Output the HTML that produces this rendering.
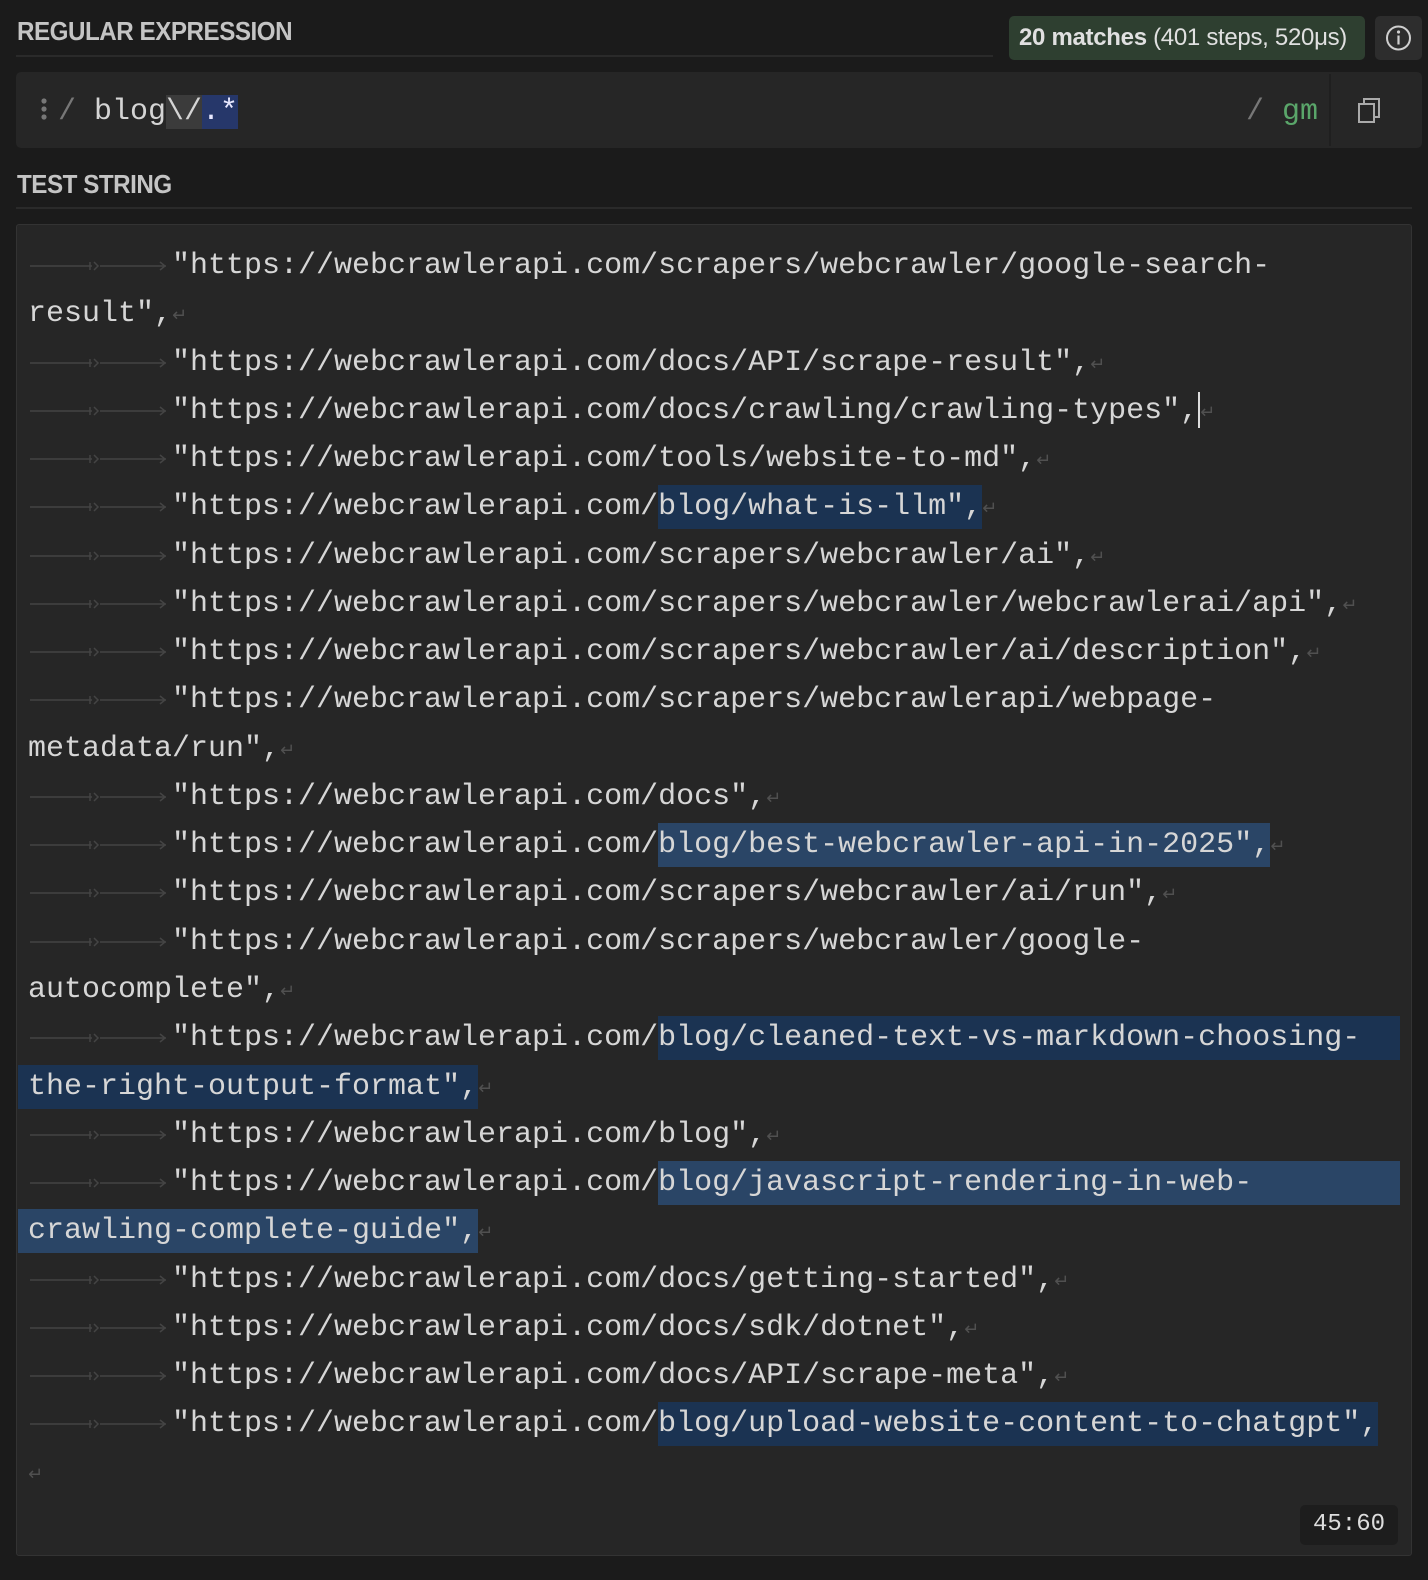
<!DOCTYPE html>
<html><head><meta charset="utf-8"><style>
*{margin:0;padding:0;box-sizing:border-box}
body{width:1428px;height:1580px;background:#1b1b1b;position:relative;overflow:hidden;font-family:"Liberation Sans",sans-serif;color:#d4d4d4}
.h{position:absolute;left:17px;font-size:26px;font-weight:bold;color:#c4c4c4;letter-spacing:-0.5px;transform:scaleX(0.93);transform-origin:left}
.rule{position:absolute;height:2px;background:#2a2a2a}
.badge{position:absolute;left:1009px;top:16px;width:356px;height:44px;background:#2e3f30;border-radius:5px;font-size:24px;line-height:44px;padding-left:10px;color:#e0e0e0;letter-spacing:-0.3px}
.info{position:absolute;left:1375px;top:16px;width:47px;height:44px;background:#2d2d2d;border-radius:5px}
.rbox{position:absolute;left:16px;top:72px;width:1406px;height:76px;background:#262626;border-radius:5px}
.mono{font-family:"Liberation Mono",monospace;font-size:30px}
.ed{position:absolute;left:16px;top:224px;width:1396px;height:1332px;background:#262626;border:1px solid #333;border-radius:3px}
.rows{position:absolute;left:11px;top:17px}
.r{height:48.28px;line-height:48.28px;white-space:pre;font-family:"Liberation Mono",monospace;font-size:30px;color:#d6d6d6;position:relative}
.t{display:inline-block;width:144px;height:48px;vertical-align:top;position:relative}
.t svg{position:absolute;left:0;top:0}
.rt{color:#505050;font-size:18px;font-family:"DejaVu Sans",sans-serif}
.a{background:#1b3352;padding:5px 0}
.b{background:#2a4566;padding:5px 0}
.cur{display:inline-block;width:2px;height:36px;background:#ddd;vertical-align:middle}
</style></head><body>
<div class="h" style="top:16px">REGULAR EXPRESSION</div>
<div class="rule" style="left:16px;top:55px;width:977px"></div>
<div class="badge"><b>20 matches</b> (401 steps, 520μs)</div>
<div class="info"><svg width="47" height="44" viewBox="0 0 47 44"><circle cx="23.5" cy="22" r="11.5" fill="none" stroke="#cfcfcf" stroke-width="2"/><circle cx="23.5" cy="16" r="1.6" fill="#cfcfcf"/><rect x="22.4" y="19.5" width="2.2" height="9" fill="#cfcfcf"/></svg></div>
<div class="rbox">
<svg style="position:absolute;left:24px;top:26px" width="8" height="24"><circle cx="4" cy="3" r="2.6" fill="#777"/><circle cx="4" cy="11" r="2.6" fill="#777"/><circle cx="4" cy="19" r="2.6" fill="#777"/></svg>
<div class="mono" style="position:absolute;left:42px;top:21px;line-height:38px;white-space:pre"><span style="color:#777">/</span> blog<span style="background:#3b3b3b">\/</span><span style="background:#26376a;color:#e8e8ff">.*</span></div>
<div class="mono" style="position:absolute;left:1230px;top:21px;line-height:38px;white-space:pre"><span style="color:#777">/</span> <span style="color:#5aa66a">gm</span></div>
<div style="position:absolute;left:1313px;top:2px;width:2px;height:72px;background:#1f1f1f"></div>
<svg style="position:absolute;left:1340px;top:24px" width="30" height="30" viewBox="0 0 30 30"><rect x="3" y="8" width="15" height="18" fill="none" stroke="#aaa" stroke-width="2"/><path d="M8 8V3h15v18h-5" fill="none" stroke="#aaa" stroke-width="2"/></svg>
</div>
<div class="h" style="top:169px">TEST STRING</div>
<div class="rule" style="left:16px;top:207px;width:1396px"></div>
<div class="ed">
<div class="rows">
<div class="r"><span class="t"><svg width="144" height="48"><path d="M2 24H64M72 24H138" stroke="#444" stroke-width="1.5"/><path d="M62 20v8M66 20l4 4-4 4M132 20l5 4-5 4" stroke="#444" stroke-width="1.5" fill="none"/></svg></span>"https://webcrawlerapi.com/scrapers/webcrawler/google-search-</div>
<div class="r">result",<span class="rt">↵</span></div>
<div class="r"><span class="t"><svg width="144" height="48"><path d="M2 24H64M72 24H138" stroke="#444" stroke-width="1.5"/><path d="M62 20v8M66 20l4 4-4 4M132 20l5 4-5 4" stroke="#444" stroke-width="1.5" fill="none"/></svg></span>"https://webcrawlerapi.com/docs/API/scrape-result",<span class="rt">↵</span></div>
<div class="r"><span class="t"><svg width="144" height="48"><path d="M2 24H64M72 24H138" stroke="#444" stroke-width="1.5"/><path d="M62 20v8M66 20l4 4-4 4M132 20l5 4-5 4" stroke="#444" stroke-width="1.5" fill="none"/></svg></span>"https://webcrawlerapi.com/docs/crawling/crawling-types",<span class="cur"></span><span class="rt">↵</span></div>
<div class="r"><span class="t"><svg width="144" height="48"><path d="M2 24H64M72 24H138" stroke="#444" stroke-width="1.5"/><path d="M62 20v8M66 20l4 4-4 4M132 20l5 4-5 4" stroke="#444" stroke-width="1.5" fill="none"/></svg></span>"https://webcrawlerapi.com/tools/website-to-md",<span class="rt">↵</span></div>
<div class="r"><span class="t"><svg width="144" height="48"><path d="M2 24H64M72 24H138" stroke="#444" stroke-width="1.5"/><path d="M62 20v8M66 20l4 4-4 4M132 20l5 4-5 4" stroke="#444" stroke-width="1.5" fill="none"/></svg></span>"https://webcrawlerapi.com/<span class="a">blog/what-is-llm",</span><span class="rt">↵</span></div>
<div class="r"><span class="t"><svg width="144" height="48"><path d="M2 24H64M72 24H138" stroke="#444" stroke-width="1.5"/><path d="M62 20v8M66 20l4 4-4 4M132 20l5 4-5 4" stroke="#444" stroke-width="1.5" fill="none"/></svg></span>"https://webcrawlerapi.com/scrapers/webcrawler/ai",<span class="rt">↵</span></div>
<div class="r"><span class="t"><svg width="144" height="48"><path d="M2 24H64M72 24H138" stroke="#444" stroke-width="1.5"/><path d="M62 20v8M66 20l4 4-4 4M132 20l5 4-5 4" stroke="#444" stroke-width="1.5" fill="none"/></svg></span>"https://webcrawlerapi.com/scrapers/webcrawler/webcrawlerai/api",<span class="rt">↵</span></div>
<div class="r"><span class="t"><svg width="144" height="48"><path d="M2 24H64M72 24H138" stroke="#444" stroke-width="1.5"/><path d="M62 20v8M66 20l4 4-4 4M132 20l5 4-5 4" stroke="#444" stroke-width="1.5" fill="none"/></svg></span>"https://webcrawlerapi.com/scrapers/webcrawler/ai/description",<span class="rt">↵</span></div>
<div class="r"><span class="t"><svg width="144" height="48"><path d="M2 24H64M72 24H138" stroke="#444" stroke-width="1.5"/><path d="M62 20v8M66 20l4 4-4 4M132 20l5 4-5 4" stroke="#444" stroke-width="1.5" fill="none"/></svg></span>"https://webcrawlerapi.com/scrapers/webcrawlerapi/webpage-</div>
<div class="r">metadata/run",<span class="rt">↵</span></div>
<div class="r"><span class="t"><svg width="144" height="48"><path d="M2 24H64M72 24H138" stroke="#444" stroke-width="1.5"/><path d="M62 20v8M66 20l4 4-4 4M132 20l5 4-5 4" stroke="#444" stroke-width="1.5" fill="none"/></svg></span>"https://webcrawlerapi.com/docs",<span class="rt">↵</span></div>
<div class="r"><span class="t"><svg width="144" height="48"><path d="M2 24H64M72 24H138" stroke="#444" stroke-width="1.5"/><path d="M62 20v8M66 20l4 4-4 4M132 20l5 4-5 4" stroke="#444" stroke-width="1.5" fill="none"/></svg></span>"https://webcrawlerapi.com/<span class="b">blog/best-webcrawler-api-in-2025",</span><span class="rt">↵</span></div>
<div class="r"><span class="t"><svg width="144" height="48"><path d="M2 24H64M72 24H138" stroke="#444" stroke-width="1.5"/><path d="M62 20v8M66 20l4 4-4 4M132 20l5 4-5 4" stroke="#444" stroke-width="1.5" fill="none"/></svg></span>"https://webcrawlerapi.com/scrapers/webcrawler/ai/run",<span class="rt">↵</span></div>
<div class="r"><span class="t"><svg width="144" height="48"><path d="M2 24H64M72 24H138" stroke="#444" stroke-width="1.5"/><path d="M62 20v8M66 20l4 4-4 4M132 20l5 4-5 4" stroke="#444" stroke-width="1.5" fill="none"/></svg></span>"https://webcrawlerapi.com/scrapers/webcrawler/google-</div>
<div class="r">autocomplete",<span class="rt">↵</span></div>
<div class="r"><span class="t"><svg width="144" height="48"><path d="M2 24H64M72 24H138" stroke="#444" stroke-width="1.5"/><path d="M62 20v8M66 20l4 4-4 4M132 20l5 4-5 4" stroke="#444" stroke-width="1.5" fill="none"/></svg></span>"https://webcrawlerapi.com/<span class="a" style="padding-right:40px">blog/cleaned-text-vs-markdown-choosing-</span></div>
<div class="r"><span class="a" style="margin-left:-10px;padding-left:10px">the-right-output-format",</span><span class="rt">↵</span></div>
<div class="r"><span class="t"><svg width="144" height="48"><path d="M2 24H64M72 24H138" stroke="#444" stroke-width="1.5"/><path d="M62 20v8M66 20l4 4-4 4M132 20l5 4-5 4" stroke="#444" stroke-width="1.5" fill="none"/></svg></span>"https://webcrawlerapi.com/blog",<span class="rt">↵</span></div>
<div class="r"><span class="t"><svg width="144" height="48"><path d="M2 24H64M72 24H138" stroke="#444" stroke-width="1.5"/><path d="M62 20v8M66 20l4 4-4 4M132 20l5 4-5 4" stroke="#444" stroke-width="1.5" fill="none"/></svg></span>"https://webcrawlerapi.com/<span class="b" style="padding-right:148px">blog/javascript-rendering-in-web-</span></div>
<div class="r"><span class="b" style="margin-left:-10px;padding-left:10px">crawling-complete-guide",</span><span class="rt">↵</span></div>
<div class="r"><span class="t"><svg width="144" height="48"><path d="M2 24H64M72 24H138" stroke="#444" stroke-width="1.5"/><path d="M62 20v8M66 20l4 4-4 4M132 20l5 4-5 4" stroke="#444" stroke-width="1.5" fill="none"/></svg></span>"https://webcrawlerapi.com/docs/getting-started",<span class="rt">↵</span></div>
<div class="r"><span class="t"><svg width="144" height="48"><path d="M2 24H64M72 24H138" stroke="#444" stroke-width="1.5"/><path d="M62 20v8M66 20l4 4-4 4M132 20l5 4-5 4" stroke="#444" stroke-width="1.5" fill="none"/></svg></span>"https://webcrawlerapi.com/docs/sdk/dotnet",<span class="rt">↵</span></div>
<div class="r"><span class="t"><svg width="144" height="48"><path d="M2 24H64M72 24H138" stroke="#444" stroke-width="1.5"/><path d="M62 20v8M66 20l4 4-4 4M132 20l5 4-5 4" stroke="#444" stroke-width="1.5" fill="none"/></svg></span>"https://webcrawlerapi.com/docs/API/scrape-meta",<span class="rt">↵</span></div>
<div class="r"><span class="t"><svg width="144" height="48"><path d="M2 24H64M72 24H138" stroke="#444" stroke-width="1.5"/><path d="M62 20v8M66 20l4 4-4 4M132 20l5 4-5 4" stroke="#444" stroke-width="1.5" fill="none"/></svg></span>"https://webcrawlerapi.com/<span class="a">blog/upload-website-content-to-chatgpt",</span></div>
<div class="r"><span class="rt">↵</span></div>
</div>
<div class="mono" style="position:absolute;left:1283px;top:1280px;width:98px;height:40px;background:#1d1d1d;border-radius:5px;font-size:24px;line-height:40px;text-align:center;color:#ddd">45:60</div>
</div>
</body></html>
